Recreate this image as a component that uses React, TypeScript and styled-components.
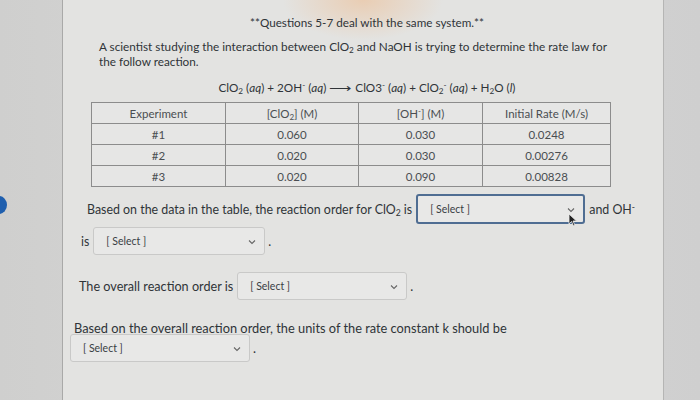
import React from "react";
import styled, { createGlobalStyle } from "styled-components";

const GlobalStyle = createGlobalStyle`
  html, body {
    margin: 0;
    padding: 0;
    background: #d2d2d1;
  }
  body {
    font-family: Lato, "Liberation Sans", sans-serif;
    color: #2f3438;
  }
`;

const Page = styled.div`
  position: relative;
  width: 700px;
  height: 400px;
  overflow: hidden;
  background: linear-gradient(90deg, #cfcfce 0%, #d8d8d7 50%, #cfcfcf 100%);
`;

const Card = styled.div`
  margin: 0 36px 0 62px;
  height: 400px;
  box-sizing: border-box;
  padding: 15px 28px 0 36px;
  border-left: 1px solid #a9a9a8;
  border-right: 1px solid #b5b5b4;
  background:
    radial-gradient(ellipse 80px 40px at 300px 0px, rgba(236, 196, 160, 0.7), transparent),
    #e3e3e1;
`;

const Title = styled.p`
  margin: 0 0 10px;
  text-align: center;
  font-size: 11.7px;
`;

const Para = styled.p`
  margin: 0;
  max-width: 515px;
  font-size: 11.75px;
  line-height: 15px;
`;

const Equation = styled.div`
  margin: 11px 0 7px;
  text-align: center;
  font-size: 11.7px;
  padding-left: 0;
  i {
    font-style: italic;
  }
`;

const Arrow = styled.span`
  display: inline-block;
  margin: 0 3px;
  transform: scaleX(1.3);
`;

const Table = styled.table`
  border-collapse: collapse;
  width: 520px;
  margin-left: -8px;
  font-size: 11.5px;
  color: #4a4e52;
  th,
  td {
    border: 1px solid #8c8c8c;
    height: 20px;
    padding: 0;
    text-align: center;
    font-weight: normal;
    background: #e6e6e5;
  }
`;

const QuestionLine = styled.div<{ $indent: number; $top: number; $size: number }>`
  display: flex;
  align-items: center;
  gap: 4px;
  margin-top: ${(p) => p.$top}px;
  margin-left: ${(p) => p.$indent}px;
  font-size: ${(p) => p.$size}px;
  white-space: nowrap;
`;

const Select = styled.div<{ $width: number; $focused?: boolean }>`
  position: relative;
  display: flex;
  align-items: center;
  justify-content: space-between;
  box-sizing: border-box;
  width: ${(p) => p.$width}px;
  height: ${(p) => (p.$focused ? 30 : 28)}px;
  padding: 0 8px 0 12px;
  border: ${(p) => (p.$focused ? "2px solid #4f6d92" : "1px solid #c9c9c8")};
  border-radius: 3px;
  background: #e8e8e7;
  font-size: 10.5px;
  color: #3a3f44;
`;

const Chevron = styled.svg`
  width: 8px;
  height: 6px;
  margin-top: 2px;
`;

const Dot = styled.span`
  margin-left: -1px;
  align-self: flex-end;
  margin-bottom: 6px;
`;

const SideDot = styled.div`
  position: absolute;
  left: -9px;
  top: 196px;
  width: 16px;
  height: 18px;
  border-radius: 50%;
  background: #1f5fae;
`;

const Cursor = styled.svg`
  position: absolute;
  left: 568px;
  top: 213px;
  width: 10px;
  height: 14px;
`;

const Sub = styled.sub`
  font-size: 0.7em;
  vertical-align: -0.25em;
  line-height: 0;
`;

const Sup = styled.sup`
  font-size: 0.7em;
  vertical-align: 0.5em;
  line-height: 0;
`;

const SelectBox = ({ width, focused }: { width: number; focused?: boolean }) => (
  <Select $width={width} $focused={focused}>
    <span>[ Select ]</span>
    <Chevron viewBox="0 0 8 6">
      <path d="M1 1.5 L4 4.5 L7 1.5" fill="none" stroke="#666" strokeWidth="1.1" />
    </Chevron>
  </Select>
);

const rows = [
  ["#1", "0.060", "0.030", "0.0248"],
  ["#2", "0.020", "0.030", "0.00276"],
  ["#3", "0.020", "0.090", "0.00828"],
];

export default function App() {
  return (
    <Page>
      <GlobalStyle />
      <SideDot />
      <Card>
        <Title>**Questions 5-7 deal with the same system.**</Title>
        <Para>
          A scientist studying the interaction between ClO<Sub>2</Sub> and NaOH is trying to determine the rate law for
          the follow reaction.
        </Para>
        <Equation>
          ClO<Sub>2</Sub> (<i>aq</i>) + 2OH<Sup>-</Sup> (<i>aq</i>) <Arrow>⟶</Arrow> ClO3<Sup>-</Sup> (<i>aq</i>) +
          ClO<Sub>2</Sub>
          <Sup>-</Sup> (<i>aq</i>) + H<Sub>2</Sub>O (<i>l</i>)
        </Equation>
        <Table>
          <thead>
            <tr>
              <th style={{ width: 133 }}>Experiment</th>
              <th style={{ width: 132 }}>
                [ClO<Sub>2</Sub>] (M)
              </th>
              <th style={{ width: 123 }}>
                [OH<Sup>-</Sup>] (M)
              </th>
              <th>Initial Rate (M/s)</th>
            </tr>
          </thead>
          <tbody>
            {rows.map((r) => (
              <tr key={r[0]}>
                {r.map((c, i) => (
                  <td key={i}>{c}</td>
                ))}
              </tr>
            ))}
          </tbody>
        </Table>
        <QuestionLine $indent={-12} $top={7} $size={12.4}>
          <span>
            Based on the data in the table, the reaction order for ClO<Sub>2</Sub> is
          </span>
          <SelectBox width={170} focused />
          <span>
            and OH<Sup>-</Sup>
          </span>
        </QuestionLine>
        <QuestionLine $indent={-18} $top={3} $size={12.4}>
          <span>is</span>
          <SelectBox width={172} />
          <Dot>.</Dot>
        </QuestionLine>
        <QuestionLine $indent={-20} $top={17} $size={12.65}>
          <span>The overall reaction order is</span>
          <SelectBox width={170} />
          <Dot>.</Dot>
        </QuestionLine>
        <QuestionLine $indent={-25} $top={20} $size={12.8}>
          <span>Based on the overall reaction order, the units of the rate constant k should be</span>
        </QuestionLine>
        <QuestionLine $indent={-29} $top={-2} $size={12.8}>
          <SelectBox width={180} />
          <Dot>.</Dot>
        </QuestionLine>
      </Card>
      <Cursor viewBox="0 0 10 14">
        <path d="M1 1 L1 11 L3.5 8.5 L5.5 13 L7 12.3 L5 8 L8.5 8 Z" fill="#222" stroke="#eee" strokeWidth="0.8" />
      </Cursor>
    </Page>
  );
}
